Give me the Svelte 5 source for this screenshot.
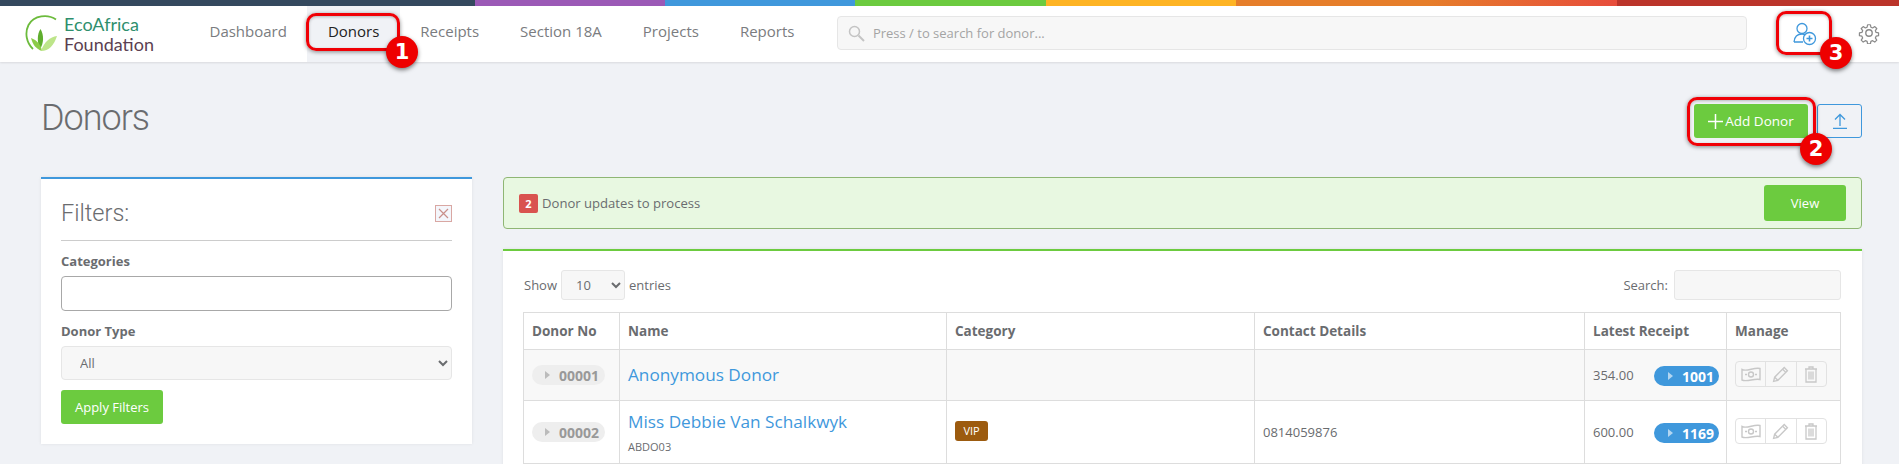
<script>
	const links = ['Dashboard', 'Donors', 'Receipts', 'Section 18A', 'Projects', 'Reports'];
	const donors = [
		{ no: '00001', name: 'Anonymous Donor', amount: '354.00', receipt: '1001' },
		{ no: '00002', name: 'Miss Debbie Van Schalkwyk', code: 'ABDO03', vip: true, phone: '0814059876', amount: '600.00', receipt: '1169' }
	];
</script>

<div class="page">
	<div class="rainbow">
		<span class="seg dark"></span>
		<span class="seg purple"></span>
		<span class="seg blue"></span>
		<span class="seg green"></span>
		<span class="seg yellow"></span>
		<span class="seg orange"></span>
		<span class="seg red"></span>
	</div>

	<header class="nav">
		<div class="logo">
			<svg width="34" height="38" viewBox="0 0 34 38">
				<path d="M31 4.500C23 -1 9 0 3.500 10C-0.500 18 1.500 28 8 34" fill="none" stroke="#6cbb3c" stroke-width="1.800" />
				<path d="M15.500 14C12 19 12 27 15 34C19 28 19 20 15.500 14Z" fill="#5fae2e" />
				<path d="M6 23C8 30 11 34 17 36C16 30 12 25 6 23Z" fill="#8ccb48" />
				<path d="M32 21C25 22 19 27 16 36C24 36 29 30 32 21Z" fill="#bde58a" />
			</svg>
			<div class="logo-text">
				<span class="eco">EcoAfrica</span>
				<span class="foundation">Foundation</span>
			</div>
		</div>
		<nav class="links">
			{#each links as link}
				<a href="#top" class="link" class:active={link === 'Donors'}>{link}</a>
			{/each}
		</nav>
		<div class="global-search">
			<svg width="17" height="17" viewBox="0 0 17 17" fill="none" stroke="#c4c4c4" stroke-width="1.500">
				<circle cx="6.500" cy="6.500" r="5" />
				<path d="M10.500 10.500L16 16" stroke-width="2" />
			</svg>
			<span>Press / to search for donor...</span>
		</div>
		<div class="nav-icons">
			<svg class="add-user" width="24" height="24" viewBox="0 0 24 24" fill="none" stroke="#3f98dc" stroke-width="1.300">
				<circle cx="9" cy="6.500" r="5" />
				<path d="M1 20C1.500 14.500 4.500 12 9 12C10.500 12 11.500 12.300 12.500 12.800M1 20H10" />
				<circle cx="16.500" cy="16.500" r="6" />
				<path d="M16.500 13.500V19.500M13.500 16.500H19.500" stroke-width="1.600" />
			</svg>
			<svg class="gear" width="22" height="22" viewBox="0 0 24 24" fill="none" stroke="#8a8a8a" stroke-width="1.500" stroke-linejoin="round">
				<circle cx="12" cy="12" r="3.500" />
				<path d="M10.300 2h3.400l.6 3 2.100.9 2.600-1.700 2.400 2.400-1.700 2.600.9 2.100 3 .6v3.400l-3 .6-.9 2.100 1.700 2.600-2.400 2.400-2.600-1.700-2.100.9-.6 3h-3.400l-.6-3-2.100-.9-2.600 1.700-2.400-2.400 1.700-2.600-.9-2.100-3-.6v-3.400l3-.6.9-2.100-1.700-2.600 2.400-2.400 2.600 1.700 2.100-.9z" transform="translate(1.200 1.200) scale(.9)" />
			</svg>
		</div>
	</header>

	<div class="title-row">
		<h1>Donors</h1>
		<div class="title-actions">
			<button class="btn add">
				<svg width="15" height="15" viewBox="0 0 15 15" stroke="#fff" stroke-width="1.500"><path d="M7.500 0V15M0 7.500H15" /></svg>
				Add Donor
			</button>
			<button class="btn upload" aria-label="Upload">
				<svg width="14" height="16" viewBox="0 0 14 16" fill="none" stroke="#3f98dc" stroke-width="1.300">
					<path d="M7 13V1.500M2 6.500L7 1.500L12 6.500M0 15.300H14" />
				</svg>
			</button>
		</div>
	</div>

	<div class="columns">
		<aside class="filters">
			<div class="filters-head">
				<h2>Filters:</h2>
				<span class="close">
					<svg width="11" height="11" viewBox="0 0 11 11" fill="none" stroke="#c98f8a" stroke-width="1.200"><path d="M1 1L10 10M10 1L1 10" /></svg>
				</span>
			</div>
			<label for="cat">Categories</label>
			<input id="cat" class="categories" />
			<label for="type">Donor Type</label>
			<select id="type" class="type"><option>All</option></select>
			<button class="btn apply">Apply Filters</button>
		</aside>

		<main class="content">
			<div class="alert">
				<span class="count">2</span>
				<span class="alert-text">Donor updates to process</span>
				<button class="btn view">View</button>
			</div>

			<section class="card">
				<div class="table-tools">
					<div class="tool">
						<span>Show</span>
						<select class="entries"><option>10</option></select>
						<span>entries</span>
					</div>
					<div class="tool">
						<span>Search:</span>
						<input class="table-search" />
					</div>
				</div>

				<table>
					<colgroup>
						<col style="width: 96px" />
						<col style="width: 327px" />
						<col style="width: 308px" />
						<col style="width: 330px" />
						<col style="width: 142px" />
						<col style="width: 114px" />
					</colgroup>
					<thead>
						<tr>
							<th>Donor No</th>
							<th>Name</th>
							<th>Category</th>
							<th>Contact Details</th>
							<th>Latest Receipt</th>
							<th>Manage</th>
						</tr>
					</thead>
					<tbody>
						{#each donors as donor, i (donor.no)}
							<tr class:odd={i === 0}>
								<td>
									<span class="pill grey"><i class="tri"></i>{donor.no}</span>
								</td>
								<td>
									<a href="#top" class="donor-name">{donor.name}</a>
									{#if donor.code}<div class="code">{donor.code}</div>{/if}
								</td>
								<td>
									{#if donor.vip}<span class="vip">VIP</span>{/if}
								</td>
								<td class="phone">{donor.phone ?? ''}</td>
								<td>
									<div class="receipt">
										<span>{donor.amount}</span>
										<span class="pill blue"><i class="tri"></i>{donor.receipt}</span>
									</div>
								</td>
								<td>
									<div class="manage">
										<span class="m-btn">
											<svg width="20" height="15" viewBox="0 0 20 15" fill="none" stroke="#c8c8c8" stroke-width="1.400">
												<path d="M1 2.500C6 5 13 0 19 1.500V12.500C13 11 6 15.500 1 13Z" />
												<circle cx="10" cy="7.500" r="2.500" />
												<path d="M4 7.500H6M14 7.500H16" />
											</svg>
										</span>
										<span class="m-btn">
											<svg width="17" height="17" viewBox="0 0 16 16" fill="none" stroke="#c8c8c8" stroke-width="1.300">
												<path d="M1.500 14.500L2.500 10.500L11.500 1.500L14.500 4.500L5.500 13.500Z" />
												<path d="M2.500 10.500L5.500 13.500M10 3L13 6" />
											</svg>
										</span>
										<span class="m-btn">
											<svg width="14" height="17" viewBox="0 0 14 17" fill="none" stroke="#c8c8c8" stroke-width="1.300">
												<path d="M1 3H13M5 3V1H9V3M2 3V16H12V3M5 5.500V13.500M7 5.500V13.500M9 5.500V13.500" />
											</svg>
										</span>
									</div>
								</td>
							</tr>
						{/each}
					</tbody>
				</table>
			</section>
		</main>
	</div>

	<!-- screenshot callouts drawn on top of the page -->
	<div class="mark m1"></div>
	<div class="num n1">1</div>
	<div class="mark m2"></div>
	<div class="num n2">2</div>
	<div class="mark m3"></div>
	<div class="num n3">3</div>
</div>

<style>
	:global(body) {
		margin: 0;
		background: #f0f2f6;
		overflow: hidden;
	}

	.page {
		position: relative;
		height: 464px;
		overflow: hidden;
		background: #f0f2f6;
		font-family: 'Open Sans', 'Noto Sans', sans-serif;
		font-size: 13px;
		color: #6a6c6f;
	}

	.rainbow {
		display: flex;
		height: 6px;
	}

	.seg {
		display: block;
		height: 6px;
	}

	.dark { width: 475px; background: #34495e; }
	.purple { width: 190px; background: #9b59b6; }
	.blue { width: 190px; background: #3f98dc; }
	.green { width: 191px; background: #6ccb3f; }
	.yellow { width: 190px; background: #feb424; }
	.orange { width: 381px; background: linear-gradient(90deg, #e67e2a 50%, #e74c3c 100%); }
	.red { flex: 1; background: #bb342a; }

	.nav {
		display: flex;
		align-items: stretch;
		height: 56px;
		background: #fff;
		box-shadow: 0 1px 2px rgba(0, 0, 0, 0.1);
	}

	.logo {
		display: flex;
		align-items: center;
		gap: 6px;
		width: 164px;
		padding-left: 25px;
	}

	.logo-text {
		display: flex;
		flex-direction: column;
		font-family: Lato, sans-serif;
		font-size: 18px;
		line-height: 20px;
		margin-left: -1px;
		margin-top: -1px;
	}

	.eco { color: #2f8f6d; }
	.foundation { color: #5b3f52; }

	.links {
		display: flex;
	}

	.link {
		display: flex;
		align-items: center;
		padding: 0 20.500px 6px;
		font-size: 15px;
		color: #7a7c80;
		text-decoration: none;
	}

	.link.active {
		background: #f0f2f6;
		color: #222;
	}

	.global-search {
		display: flex;
		align-items: center;
		gap: 8px;
		box-sizing: border-box;
		width: 910px;
		height: 34px;
		margin: 10px 0 0 22px;
		padding-left: 10px;
		background: #f7f7f7;
		border: 1px solid #e6e6e6;
		border-radius: 4px;
		color: #a4a4a4;
		font-size: 13px;
	}

	.nav-icons {
		position: relative;
		flex: 1;
	}

	.add-user {
		position: absolute;
		left: 46px;
		top: 16px;
	}

	.gear {
		position: absolute;
		left: 111px;
		top: 16px;
	}

	.title-row {
		display: flex;
		justify-content: space-between;
		padding: 42px 37px 0 41px;
		height: 73px;
	}

	h1 {
		margin: -9px 0 0;
		font-family: Roboto, sans-serif;
		font-size: 36px;
		font-weight: 300;
		letter-spacing: -1px;
		line-height: 46px;
		color: #6a6c6f;
	}

	.title-actions {
		display: flex;
		gap: 9px;
		height: 34px;
	}

	.btn {
		border: 0;
		border-radius: 3px;
		font-family: inherit;
		font-size: 13px;
		color: #fff;
		background: #6ccb3f;
		padding: 0;
		cursor: pointer;
	}

	.add {
		display: flex;
		align-items: center;
		justify-content: center;
		gap: 2px;
		width: 114px;
		font-size: 13.500px;
	}

	.upload {
		display: flex;
		align-items: center;
		justify-content: center;
		width: 45px;
		background: transparent;
		border: 1px solid #3f98dc;
	}

	.columns {
		display: flex;
		gap: 31px;
		padding: 0 37px 0 41px;
	}

	.filters {
		box-sizing: border-box;
		width: 431px;
		height: 267px;
		padding: 0 20px;
		background: #fff;
		border-top: 2px solid #3f98dc;
		box-shadow: 0 0 3px rgba(0, 0, 0, 0.08);
	}

	.filters-head {
		display: flex;
		align-items: center;
		justify-content: space-between;
		height: 61px;
		border-bottom: 1px solid #ccc;
		margin-bottom: 11px;
	}

	h2 {
		margin: 7px 0 0;
		font-family: Roboto, sans-serif;
		font-size: 23.500px;
		font-weight: 300;
		color: #6a6c6f;
	}

	.close {
		display: flex;
		align-items: center;
		justify-content: center;
		box-sizing: border-box;
		width: 17px;
		height: 17px;
		margin-top: 7px;
		border: 1px solid #d9a7a3;
		background: #f4f6fb;
	}

	label {
		display: block;
		font-size: 13px;
		font-weight: 700;
		line-height: 18px;
		color: #6a6c6f;
	}

	.categories {
		display: block;
		box-sizing: border-box;
		width: 100%;
		height: 35px;
		margin: 6px 0 11px;
		background: #fff;
		border: 1px solid #a8a8a8;
		border-radius: 4px;
	}

	.type {
		display: block;
		box-sizing: border-box;
		width: 100%;
		height: 34px;
		margin: 6px 0 10px;
		padding-left: 14px;
		background: #f7f7f7;
		border: 1px solid #e6e6e6;
		border-radius: 4px;
		font-family: inherit;
		font-size: 13px;
		color: #6a6c6f;
	}

	.apply {
		display: block;
		width: 102px;
		height: 34px;
	}

	.content {
		width: 1359px;
	}

	.alert {
		display: flex;
		align-items: center;
		box-sizing: border-box;
		height: 52px;
		padding: 0 15px;
		background: #e8f8e1;
		border: 1px solid #8fb674;
		border-radius: 4px;
	}

	.count {
		display: flex;
		align-items: center;
		justify-content: center;
		width: 19px;
		height: 19px;
		margin-right: 4px;
		background: #d9534f;
		border-radius: 2px;
		color: #fff;
		font-size: 11px;
		font-weight: 700;
	}

	.alert-text {
		flex: 1;
		font-size: 13.100px;
	}

	.view {
		width: 82px;
		height: 36px;
	}

	.card {
		box-sizing: border-box;
		height: 300px;
		margin-top: 20px;
		padding: 19px 21px 0;
		background: #fff;
		border-top: 2px solid #6ccb3f;
		box-shadow: 0 0 3px rgba(0, 0, 0, 0.08);
	}

	.table-tools {
		display: flex;
		justify-content: space-between;
		height: 30px;
		margin-bottom: 12px;
	}

	.tool {
		display: flex;
		align-items: center;
		gap: 4px;
		font-size: 13px;
	}

	.entries {
		box-sizing: border-box;
		width: 64px;
		height: 30px;
		padding-left: 10px;
		background: #f7f7f7;
		border: 1px solid #e6e6e6;
		border-radius: 3px;
		font-family: inherit;
		font-size: 13px;
		color: #6a6c6f;
	}

	.table-search {
		box-sizing: border-box;
		width: 167px;
		height: 30px;
		margin-left: 2px;
		background: #f7f7f7;
		border: 1px solid #e6e6e6;
		border-radius: 3px;
	}

	table {
		width: 1317px;
		margin-left: -1px;
		table-layout: fixed;
		border-collapse: collapse;
		background: #fff;
	}

	th,
	td {
		border: 1px solid #ddd;
		padding: 0 8px;
		text-align: left;
		vertical-align: middle;
	}

	th {
		height: 36px;
		font-size: 13.500px;
		font-weight: 700;
		color: #6a6c6f;
	}

	tbody tr {
		height: 63px;
	}

	tbody tr.odd {
		height: 51px;
		background: #f8f8f8;
	}

	.pill {
		display: inline-flex;
		align-items: center;
		height: 20px;
		border-radius: 10px;
		font-size: 14px;
		font-weight: 700;
	}

	.pill.grey {
		box-sizing: border-box;
		width: 73px;
		padding-left: 13px;
		background: #eee;
		color: #999;
	}

	.pill.blue {
		box-sizing: border-box;
		width: 65px;
		padding-left: 14px;
		margin-top: 2px;
		background: #3f98dc;
		color: #fff;
	}

	.tri {
		width: 0;
		height: 0;
		margin-right: 9px;
		border-left: 5px solid currentColor;
		border-top: 4.500px solid transparent;
		border-bottom: 4.500px solid transparent;
		opacity: 0.6;
	}

	.donor-name {
		display: block;
		color: #3f98dc;
		font-size: 17.200px;
		line-height: 24px;
		text-decoration: none;
	}

	.code {
		margin-top: 5px;
		font-size: 11px;
		line-height: 16px;
	}

	.vip {
		display: inline-block;
		width: 33px;
		height: 20px;
		margin-bottom: 2px;
		line-height: 20px;
		text-align: center;
		background: #9c5b0f;
		border-radius: 3px;
		color: #fff;
		font-size: 11px;
	}

	.phone {
		font-size: 13px;
	}

	.receipt {
		display: flex;
		align-items: center;
		justify-content: space-between;
		font-size: 13px;
		margin-right: -1px;
	}

	.manage {
		display: flex;
		width: 92px;
		height: 26px;
		box-sizing: border-box;
		margin-top: -2px;
		border: 1px solid #e2e2e2;
		border-radius: 4px;
	}

	.m-btn {
		display: flex;
		align-items: center;
		justify-content: center;
		flex: 1;
	}

	.m-btn + .m-btn {
		border-left: 1px solid #e2e2e2;
	}

	.mark {
		position: absolute;
		box-sizing: border-box;
		border: 3px solid #f00006;
		border-radius: 10px;
		box-shadow: 0 1px 4px rgba(0, 0, 0, 0.45), inset 0 1px 3px rgba(0, 0, 0, 0.25);
	}

	.m1 { left: 306px; top: 13px; width: 94px; height: 38px; }
	.m2 { left: 1687px; top: 97px; width: 129px; height: 49px; }
	.m3 { left: 1776px; top: 11px; width: 56px; height: 44px; }

	.num {
		position: absolute;
		width: 32px;
		height: 32px;
		line-height: 32px;
		text-align: center;
		background: #ee0000;
		border-radius: 50%;
		color: #fff;
		font-family: 'DejaVu Sans', sans-serif;
		font-size: 21px;
		font-weight: 700;
		box-shadow: 0 2px 4px rgba(0, 0, 0, 0.5);
	}

	.n1 { left: 386px; top: 36px; }
	.n2 { left: 1800px; top: 133px; }
	.n3 { left: 1820px; top: 37px; }
</style>
